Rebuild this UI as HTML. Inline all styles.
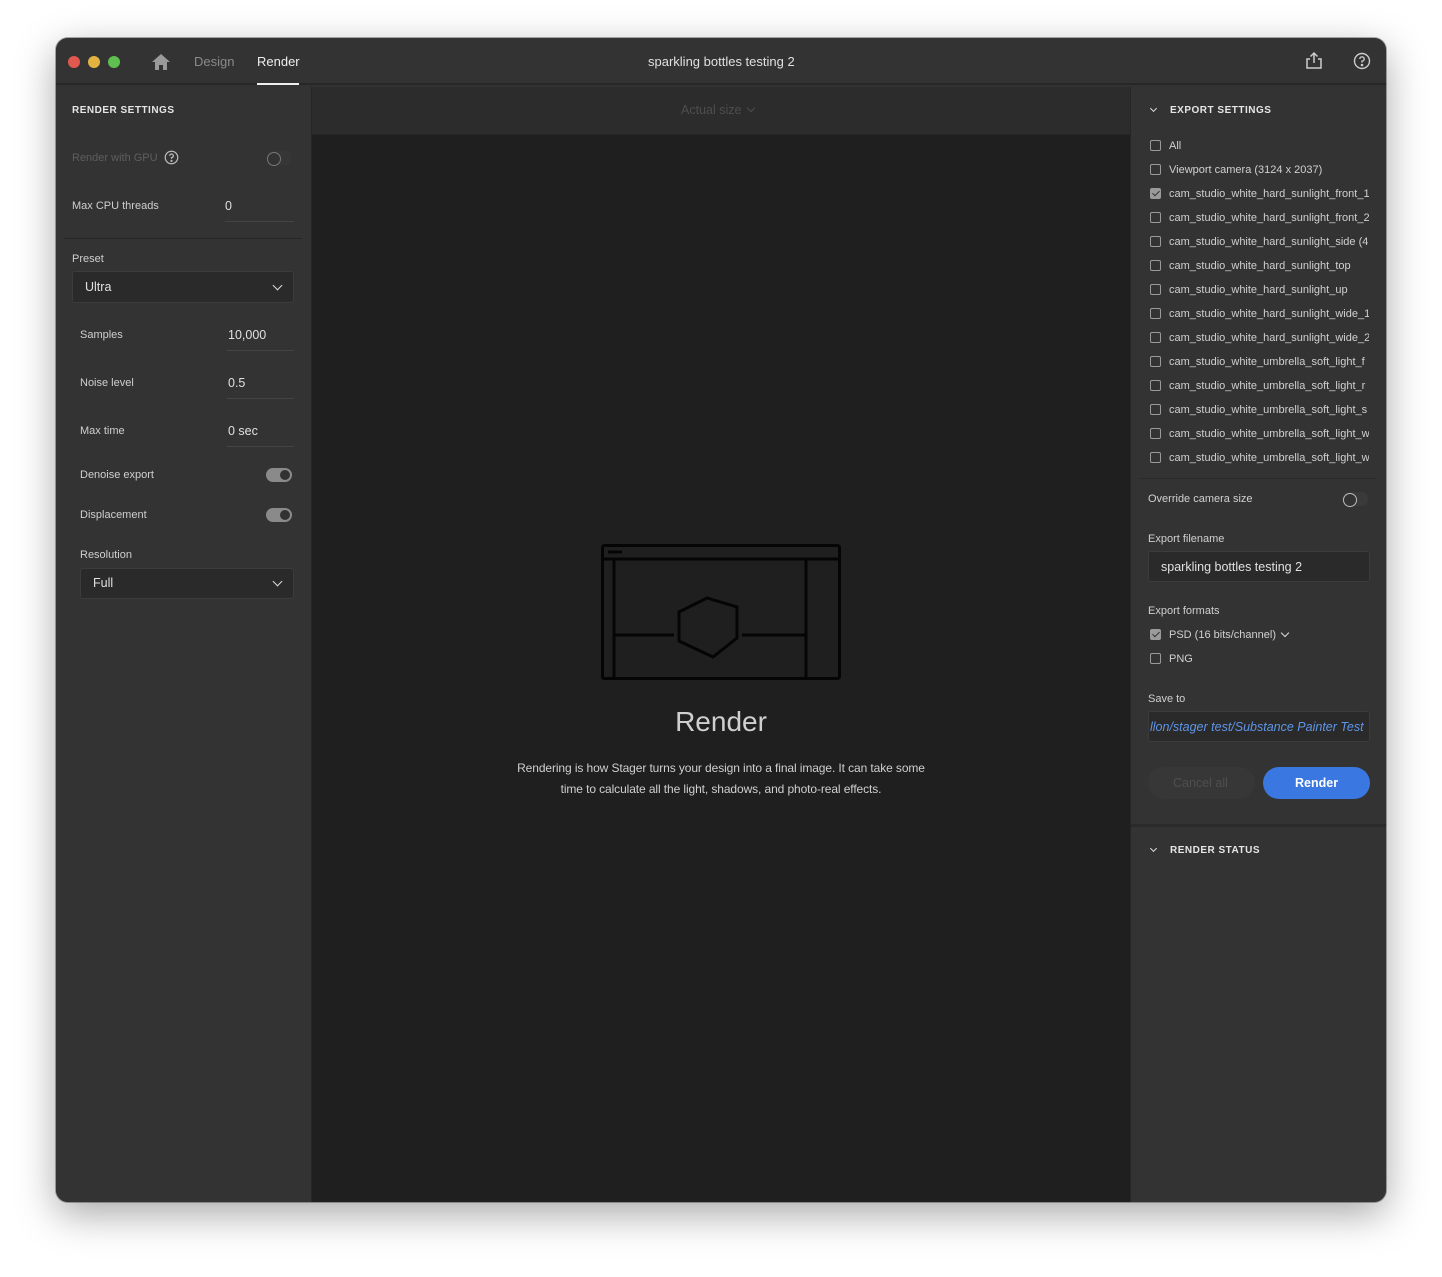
<!DOCTYPE html>
<html><head><style>
*{box-sizing:border-box;margin:0;padding:0}
body{width:1442px;height:1277px;background:#fff;font-family:"Liberation Sans",sans-serif;position:relative;overflow:hidden}
.win{position:absolute;left:56px;top:38px;width:1330px;height:1164px;border-radius:12px;overflow:hidden;background:#323232;box-shadow:0 12px 40px rgba(0,0,0,.35),0 0 0 1px rgba(0,0,0,.3)}
.a{position:absolute}
.t{position:absolute;white-space:nowrap;color:#d0d0d0;font-size:11px}
.lbl{font-size:11px;color:#cfcfcf}
.val{font-size:12.5px;color:#e0e0e0}
.ul{position:absolute;height:1px;background:#444}
.tog{position:absolute;width:26px;height:14px;border-radius:7px}
.tog::after{content:"";position:absolute;border-radius:50%}
.on{background:#8a8a8a}.on::after{right:2px;top:2px;width:10px;height:10px;background:#323232}
.off{background:#3a3a3a}.off::after{left:1px;top:1px;border:1.5px solid #bbb;width:12px;height:12px;background:#333}
.cb{position:absolute;width:11px;height:11px;border:1.5px solid #9a9a9a;border-radius:2px}
.cbk{background:#9a9a9a}
.cbk::after{content:"";position:absolute;left:2.5px;top:0px;width:3px;height:6px;border-right:1.5px solid #333;border-bottom:1.5px solid #333;transform:rotate(45deg)}
.sel{position:absolute;background:#2a2a2a;border:1px solid #3c3c3c;border-radius:3px}
.chev{position:absolute;width:7px;height:7px;border-right:1.6px solid #ddd;border-bottom:1.6px solid #ddd;transform:rotate(45deg)}
.hd{font-size:10px;font-weight:bold;color:#e6e6e6;letter-spacing:.5px}
</style></head><body>
<div class="win">
 <div class="a" style="left:0;top:0;width:1330px;height:47px;background:#333;border-bottom:2px solid #272727"></div>
 <div class="a" style="left:12px;top:18px;width:12px;height:12px;border-radius:50%;background:#e0594e"></div>
 <div class="a" style="left:32px;top:18px;width:12px;height:12px;border-radius:50%;background:#e3b342"></div>
 <div class="a" style="left:52px;top:18px;width:12px;height:12px;border-radius:50%;background:#5ec04e"></div>
 <svg class="a" style="left:95px;top:15px" width="20" height="18" viewBox="0 0 20 18"><path d="M10 1 L1 9 H4 V17 H8 V12 H12 V17 H16 V9 H19 Z" fill="#9a9a9a"/></svg>
 <div class="t" style="left:138px;top:16px;font-size:13px;color:#8a8a8a">Design</div>
 <div class="t" style="left:201px;top:16px;font-size:13px;color:#eee">Render</div>
 <div class="a" style="left:201px;top:45px;width:42px;height:2px;background:#eee"></div>
 <div class="t" style="left:592px;top:16px;font-size:13px;color:#e0e0e0">sparkling bottles testing 2</div>
 <svg class="a" style="left:1248px;top:13px" width="20" height="20" viewBox="0 0 20 20" fill="none" stroke="#ccc" stroke-width="1.5"><path d="M10 2 V12 M6.5 5.5 L10 2 L13.5 5.5 M6 8 H3 V17 H17 V8 H14"/></svg>
 <svg class="a" style="left:1297px;top:14px" width="18" height="18" viewBox="0 0 18 18" fill="none" stroke="#ccc" stroke-width="1.4"><circle cx="9" cy="9" r="7.5"/><path d="M6.8 7 A2.2 2.2 0 1 1 9 9.2 V10.5"/><circle cx="9" cy="13" r=".6" fill="#ccc"/></svg>

 <div class="a" style="left:0;top:49px;width:255px;height:1115px;background:#333"></div>
 <div class="t hd" style="left:16px;top:67px">RENDER SETTINGS</div>
 <div class="t" style="left:16px;top:114px;color:#5e5e5e">Render with GPU</div>
 <svg class="a" style="left:108px;top:112px" width="15" height="15" viewBox="0 0 18 18" fill="none" stroke="#bbb" stroke-width="1.5"><circle cx="9" cy="9" r="7.5"/><path d="M6.8 7 A2.2 2.2 0 1 1 9 9.2 V10.5"/><circle cx="9" cy="13" r=".6" fill="#bbb"/></svg>
 <div class="tog off" style="left:210px;top:113px;opacity:.5"></div>
 <div class="t lbl" style="left:16px;top:162px">Max CPU threads</div>
 <div class="t val" style="left:169px;top:161px">0</div>
 <div class="ul" style="left:169px;top:183px;width:69px"></div>
 <div class="a" style="left:8px;top:200px;width:238px;height:1px;background:#262626"></div>
 <div class="t lbl" style="left:16px;top:215px">Preset</div>
 <div class="sel" style="left:16px;top:233px;width:222px;height:32px"></div>
 <div class="t val" style="left:29px;top:242px">Ultra</div>
 <div class="chev" style="left:218px;top:244px"></div>
 <div class="t lbl" style="left:24px;top:291px">Samples</div>
 <div class="t val" style="left:172px;top:290px">10,000</div>
 <div class="ul" style="left:171px;top:312px;width:67px"></div>
 <div class="t lbl" style="left:24px;top:339px">Noise level</div>
 <div class="t val" style="left:172px;top:338px">0.5</div>
 <div class="ul" style="left:171px;top:360px;width:67px"></div>
 <div class="t lbl" style="left:24px;top:387px">Max time</div>
 <div class="t val" style="left:172px;top:386px">0 sec</div>
 <div class="ul" style="left:171px;top:408px;width:67px"></div>
 <div class="t lbl" style="left:24px;top:431px">Denoise export</div>
 <div class="tog on" style="left:210px;top:430px"></div>
 <div class="t lbl" style="left:24px;top:471px">Displacement</div>
 <div class="tog on" style="left:210px;top:470px"></div>
 <div class="t lbl" style="left:24px;top:511px">Resolution</div>
 <div class="sel" style="left:24px;top:530px;width:214px;height:31px"></div>
 <div class="t val" style="left:37px;top:538px">Full</div>
 <div class="chev" style="left:218px;top:540px"></div>

 <div class="a" style="left:255px;top:49px;width:820px;height:1115px;background:#1f1f1f;border-left:1px solid #262626;border-right:1px solid #262626"></div>
 <div class="a" style="left:256px;top:49px;width:818px;height:48px;background:#2c2c2c;border-bottom:1px solid #252525"></div>
 <div class="t" style="left:625px;top:65px;font-size:12.5px;color:#4e4e4e">Actual size</div>
 <div class="chev" style="left:692px;top:67px;border-color:#4e4e4e;width:6px;height:6px"></div>
 <svg class="a" style="left:544px;top:505px" width="242" height="138" viewBox="0 0 242 138" fill="none" stroke="#050505" stroke-width="3"><rect x="2.5" y="2.5" width="237" height="133" rx="2"/><path d="M2.5 16 H239.5 M14 16 V135.5 M206 16 V135.5 M14 92 H74 M142 92 H206 M8 9 H22"/><path d="M79 69 L107 55 L137 64 L137 95 L113 114 L79 98 Z"/></svg>
 <div class="t" style="left:565px;top:668px;width:200px;text-align:center;font-size:28px;color:#cfcfcf">Render</div>
 <div class="t" style="left:455px;top:720px;width:420px;text-align:center;font-size:12px;line-height:21px;color:#cfcfcf;white-space:normal;letter-spacing:-0.1px">Rendering is how Stager turns your design into a final image. It can take some time to calculate all the light, shadows, and photo-real effects.</div>

 <div class="a" style="left:1075px;top:49px;width:255px;height:737px;background:#333"></div>
 <div class="a" style="left:1075px;top:786px;width:255px;height:3px;background:#2a2a2a"></div>
 <div class="a" style="left:1075px;top:789px;width:255px;height:375px;background:#333"></div>
 <div class="chev" style="left:1095px;top:68px;width:5px;height:5px;border-width:1.4px"></div>
 <div class="t hd" style="left:1114px;top:67px">EXPORT SETTINGS</div>

 <div class="cb" style="left:1094px;top:102px"></div><div class="t" style="left:1113px;top:102px">All</div>
 <div class="cb" style="left:1094px;top:126px"></div><div class="t" style="left:1113px;top:126px">Viewport camera (3124 x 2037)</div>
 <div class="cb cbk" style="left:1094px;top:150px"></div><div class="t" style="left:1113px;top:150px;width:200px;overflow:hidden">cam_studio_white_hard_sunlight_front_1</div>
 <div class="cb" style="left:1094px;top:174px"></div><div class="t" style="left:1113px;top:174px;width:200px;overflow:hidden">cam_studio_white_hard_sunlight_front_2</div>
 <div class="cb" style="left:1094px;top:198px"></div><div class="t" style="left:1113px;top:198px;width:200px;overflow:hidden">cam_studio_white_hard_sunlight_side (4</div>
 <div class="cb" style="left:1094px;top:222px"></div><div class="t" style="left:1113px;top:222px">cam_studio_white_hard_sunlight_top</div>
 <div class="cb" style="left:1094px;top:246px"></div><div class="t" style="left:1113px;top:246px">cam_studio_white_hard_sunlight_up</div>
 <div class="cb" style="left:1094px;top:270px"></div><div class="t" style="left:1113px;top:270px;width:200px;overflow:hidden">cam_studio_white_hard_sunlight_wide_1</div>
 <div class="cb" style="left:1094px;top:294px"></div><div class="t" style="left:1113px;top:294px;width:200px;overflow:hidden">cam_studio_white_hard_sunlight_wide_2</div>
 <div class="cb" style="left:1094px;top:318px"></div><div class="t" style="left:1113px;top:318px;width:200px;overflow:hidden">cam_studio_white_umbrella_soft_light_f</div>
 <div class="cb" style="left:1094px;top:342px"></div><div class="t" style="left:1113px;top:342px;width:200px;overflow:hidden">cam_studio_white_umbrella_soft_light_r</div>
 <div class="cb" style="left:1094px;top:366px"></div><div class="t" style="left:1113px;top:366px;width:200px;overflow:hidden">cam_studio_white_umbrella_soft_light_s</div>
 <div class="cb" style="left:1094px;top:390px"></div><div class="t" style="left:1113px;top:390px;width:200px;overflow:hidden">cam_studio_white_umbrella_soft_light_w</div>
 <div class="cb" style="left:1094px;top:414px"></div><div class="t" style="left:1113px;top:414px;width:200px;overflow:hidden">cam_studio_white_umbrella_soft_light_w</div>
 <div class="a" style="left:1083px;top:440px;width:238px;height:1px;background:#2a2a2a"></div>
 <div class="t" style="left:1092px;top:455px">Override camera size</div>
 <div class="tog off" style="left:1286px;top:454px"></div>
 <div class="t" style="left:1092px;top:495px">Export filename</div>
 <div class="sel" style="left:1092px;top:513px;width:222px;height:31px"></div>
 <div class="t val" style="left:1105px;top:522px">sparkling bottles testing 2</div>
 <div class="t" style="left:1092px;top:567px">Export formats</div>
 <div class="cb cbk" style="left:1094px;top:591px"></div><div class="t" style="left:1113px;top:591px">PSD (16 bits/channel)</div>
 <div class="chev" style="left:1226px;top:592px;width:6px;height:6px;border-width:1.4px"></div>
 <div class="cb" style="left:1094px;top:615px"></div><div class="t" style="left:1113px;top:615px">PNG</div>
 <div class="t" style="left:1092px;top:655px">Save to</div>
 <div class="sel" style="left:1092px;top:673px;width:222px;height:31px;overflow:hidden"></div>
 <div class="t" style="left:1094px;top:682px;font-size:12.5px;font-style:italic;color:#5f95e6">llon/stager test/Substance Painter Test</div>
 <div class="a" style="left:1092px;top:729px;width:107px;height:32px;border-radius:16px;background:#373737"></div>
 <div class="t" style="left:1117px;top:738px;font-size:12.5px;color:#4f4f4f">Cancel all</div>
 <div class="a" style="left:1207px;top:729px;width:107px;height:32px;border-radius:16px;background:#3a77e0"></div>
 <div class="t" style="left:1239px;top:738px;font-size:12.5px;font-weight:bold;color:#fff">Render</div>
 <div class="chev" style="left:1095px;top:808px;width:5px;height:5px;border-width:1.4px"></div>
 <div class="t hd" style="left:1114px;top:807px">RENDER STATUS</div>
</div>
</body></html>
